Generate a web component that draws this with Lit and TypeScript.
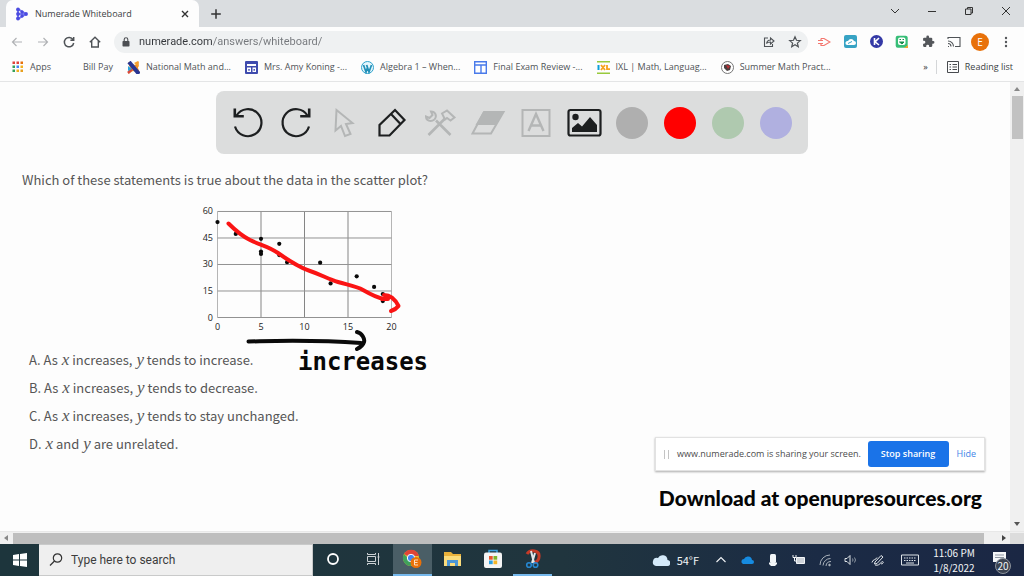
import { LitElement, html, svg, css } from "lit";
import { customElement } from "lit/decorators.js";

const base = css`
  :host, * { box-sizing: border-box; }
  button, input { font: inherit; color: inherit; border: 0; padding: 0; margin: 0; background: none; outline: 0; }
  button { display: flex; align-items: center; justify-content: center; }
  a { color: inherit; text-decoration: none; }
  svg { display: block; flex: none; }
`;

const line = (d: string, w = 1.2, size = 14) => html`<svg width=${size} height=${size} viewBox="0 0 14 14" fill="none" stroke="currentColor" stroke-width=${w}><path d=${d} /></svg>`;

@customElement("browser-chrome")
export class BrowserChrome extends LitElement {
  static styles = [base, css`
    :host { display: block; font: 9px/14px "Open Sans", sans-serif; color: #4f5357; background: #fdfdfd; border-bottom: 1px solid #e4e5e6; }
    .strip { display: flex; height: 27px; background: #dadde0; padding-left: 6px; }
    .tab { display: flex; align-items: center; gap: 7px; width: 193px; padding: 0 8px 0 10px; background: #fdfdfd; border-radius: 7px 7px 0 0; color: #3c3f43; }
    .name { flex: 1; text-align: left; }
    .close { width: 12px; height: 14px; color: #333; }
    .plus { width: 34px; color: #333; }
    .win { display: flex; margin-left: auto; height: 22px; color: #333; }
    .win button { width: 37px; }
    .bar { display: flex; align-items: center; height: 29px; padding: 0 5px 0 4px; }
    .icon { width: 26px; height: 24px; flex: none; }
    .dim { color: #b0b2b5; }
    .pill { display: flex; align-items: center; flex: 1; height: 22px; margin: 0 3px 0 6px; padding: 0 0 0 8px; border-radius: 11px; background: #eff1f2; }
    .url { flex: 1; min-width: 0; margin-left: 9px; font: 11px/14px Roboto, sans-serif; background: linear-gradient(90deg, #33363a 73px, #74777b 73px); background-clip: text; -webkit-background-clip: text; -webkit-text-fill-color: transparent; }
    .marks { display: flex; align-items: center; height: 25px; padding: 0 11px 3px 12px; gap: 14px; }
    .mark { display: flex; align-items: center; gap: 6px; white-space: nowrap; }
    .plain { margin: 0 0 0 18px; }
    .more { margin-left: auto; color: #333; }
    .list { padding-left: 10px; margin-left: -6px; border-left: 1px solid #d4d6d8; color: #3c3f43; }
    .avatar { width: 18px; height: 18px; border-radius: 9px; background: #e8710a; color: #fff; text-align: center; font-size: 10px; line-height: 18px; }
  `];

  render() {
    const marks = [
      ["National Math and...", svg`<path d="M1 1 8 4 12 0 11 7 13 12 6 10 1 13 3 7Z" fill="#f0932b"/><path d="M2 1 12 13" stroke="#283593" stroke-width="4"/><path d="M1 12 5 8" stroke="#d94a3d" stroke-width="2.500"/><path d="m7 2 4-2 1 6Z" fill="#f6a12d"/><path d="M1 5 5 8 1 10Z" fill="#29a3dc"/>`],
      ["Mrs. Amy Koning -...", svg`<rect width="13" height="13" rx="1" fill="#3f4bae"/><path d="M2 3h9v2H2ZM2 6.500h4V11H2ZM7.500 6.500H11V11H7.500Z" fill="#fff"/><path d="M3.300 8h1.400v1.700H3.300ZM8.500 8h1.400v1.700H8.500Z" fill="#3f4bae"/>`],
      ["Algebra 1 – When...", svg`<circle cx="6.500" cy="6.500" r="6" fill="#e6f6fc" stroke="#2ea2cc"/><path d="m2.500 4 2.500 7 1.500-4.500L8 11l2.500-7M5.500 4l1 2.500" fill="none" stroke="#2290b8" stroke-width="1.700"/>`],
      ["Final Exam Review -...", svg`<path d="M.7.7h11.600v11.600H.7ZM.7 4h11.600M7 4v8" fill="#fff" stroke="#4a7bea" stroke-width="1.400"/>`],
      ["IXL | Math, Languag...", svg`<path d="M0 .8h13M0 12.200h13" stroke="#98c93c" stroke-width="1.500"/><path d="M1.500 4v5" stroke="#0aa0d8" stroke-width="2"/><path d="m4 4 4 5m0-5L4 9m6-5v4.200h3" fill="none" stroke="#f7a21b" stroke-width="1.800"/>`],
      ["Summer Math Pract...", svg`<circle cx="6.500" cy="6.500" r="6" fill="#fff" stroke="#777"/><path d="m3 4 4-1 3 2-1 4-3 1-3-3Z" fill="#4b4040"/><path d="m5 4 4 1-2 3Z" fill="#c22f35"/>`],
    ] as const;
    return html`
      <div class="strip">
        <div class="tab">
          <svg width="12" height="14" viewBox="0 0 12 14"><path d="M2 2v10M2 2l8 5-8 5M2 7h8" stroke="#7b7cf0" stroke-width="2" fill="none"/><g fill="#4b4be0"><circle cx="2" cy="2.500" r="1.900"/><circle cx="2" cy="7" r="1.900"/><circle cx="2" cy="11.500" r="1.900"/><circle cx="6" cy="5" r="1.700"/><circle cx="6" cy="9" r="1.700"/><circle cx="10" cy="7" r="1.900"/></g></svg>
          <span class="name">Numerade Whiteboard</span>
          <button class="close" aria-label="Close tab">${line("M4 4l6 6M10 4l-6 6", 1.4)}</button>
        </div>
        <button class="plus" aria-label="New tab">${line("M7 2.200v9.600M2.200 7h9.600", 1.5)}</button>
        <div class="win">
          <button aria-label="Search tabs">${line("M3 5l4 4 4-4", 1)}</button>
          <button aria-label="Minimize">${line("M3 7.500h8", 1)}</button>
          <button aria-label="Restore">${line("M3.500 5h5.500v5.500H3.500ZM5.500 5V3.500h5v5.500H9", 1)}</button>
          <button aria-label="Close">${line("M3 3l8 8M11 3l-8 8", 1)}</button>
        </div>
      </div>
      <div class="bar">
        <button class="icon dim" aria-label="Back">${line("M12 7H2.500M6.500 3l-4 4 4 4")}</button>
        <button class="icon dim" aria-label="Forward">${line("M2 7h9.500M7.500 3l4 4-4 4")}</button>
        <button class="icon" aria-label="Reload">${line("M11 4.500A4.700 4.700 0 1 0 11.700 8M11.700 2v3.300H8.400", 1.5)}</button>
        <button class="icon" aria-label="Home">${line("M1.800 7.300 7 2.300l5.200 5M3.700 6v6h6.600V6", 1.4)}</button>
        <div class="pill">
          <svg width="8" height="10" viewBox="0 0 8 10"><rect x=".5" y="4" width="7" height="5.500" rx=".7" fill="#4c4f53"/><path d="M2.200 4V2.600a1.800 1.800 0 0 1 3.600 0V4" fill="none" stroke="#4c4f53" stroke-width="1.100"/></svg>
          <input class="url" aria-label="Address" value="numerade.com/answers/whiteboard/" />
          <button class="icon" aria-label="Share">${line("M6 3H2.500v8.500h8V9M4.500 8.500C5 6 6.500 5 8.500 5V3L12 6 8.500 9V7C7 7 5.500 7.300 4.500 8.500Z", 1.1)}</button>
          <button class="icon" aria-label="Bookmark">${line("M7 1.800l1.500 3.500 3.800.3-2.900 2.500.9 3.700L7 9.800l-3.300 2 .9-3.700-2.900-2.500 3.800-.3Z", 1.2)}</button>
        </div>
        <button class="icon" aria-label="Screencastify"><svg width="14" height="12" viewBox="-2 0 14 12" fill="none" stroke="#f4766e" stroke-width="1.200"><path d="M2 2.500h3l6 3.500-6 3.500H2V8M-1 4.500h5M-1 7.500h5M2 2.500V4"/></svg></button>
        <button class="icon" aria-label="Cloud extension"><svg width="13" height="13"><rect width="13" height="13" rx="2" fill="#37a3c4"/><path d="M3 10h7a2 2 0 0 0 0-4 3.300 3.300 0 0 0-6 0 2 2 0 0 0-1 4Z" fill="#fff"/><path d="M4 8.500 8 6.500" stroke="#37a3c4"/></svg></button>
        <button class="icon" aria-label="Kami"><svg width="13" height="13"><circle cx="6.500" cy="6.500" r="6.500" fill="#3439a6"/><path d="M4.500 3v7M9 3 5 6.800 9 10" fill="none" stroke="#fff" stroke-width="1.600"/></svg></button>
        <button class="icon" aria-label="Bitmoji"><svg width="14" height="14"><rect x=".7" y=".7" width="12" height="12" rx="2" fill="#37be77"/><rect x="3" y="2.500" width="7.500" height="7.500" rx="2" fill="#fff"/><path d="M4.500 4.500h1.500M7.500 4.500h1.500M4.500 7h4.500l-2 2Z" stroke="#168c4b" fill="#168c4b"/><path d="m9 13 4-3v3Z" fill="#f3a42d"/></svg></button>
        <button class="icon" aria-label="Extensions"><svg width="13" height="13" viewBox="0 0 24 24" fill="#54575b"><path d="M20.500 11H19V7a2 2 0 0 0-2-2h-4V3.500a2.500 2.500 0 0 0-5 0V5H4a2 2 0 0 0-2 2v3.800h1.500a2.700 2.700 0 0 1 0 5.400H2V20c0 1.100.9 2 2 2h3.800v-1.500a2.700 2.700 0 0 1 5.400 0V22H17a2 2 0 0 0 2-2v-4h1.500a2.500 2.500 0 0 0 0-5Z"/></svg></button>
        <button class="icon" aria-label="Cast">${line("M1 4V2.500h12v9H8M1 11.500h1M1 8.500a3 3 0 0 1 3 3M1 6a5.500 5.500 0 0 1 5.500 5.500", 1.1)}</button>
        <button class="icon" aria-label="Profile"><span class="avatar">E</span></button>
        <button class="icon" aria-label="Menu"><svg width="4" height="12" fill="#54575b"><circle cx="2" cy="2" r="1.200"/><circle cx="2" cy="6" r="1.200"/><circle cx="2" cy="10" r="1.200"/></svg></button>
      </div>
      <nav class="marks">
        <a class="mark" href="#"><svg width="12" height="12">${["#e0433a", "#e0433a", "#e8710a", "#34a05a", "#4285f4", "#f2b01e", "#34a05a", "#f2b01e", "#e8a01e"].map((c, i) => svg`<rect x=${(i % 3) * 4 + 0.5} y=${Math.floor(i / 3) * 4 + 0.5} width="2.500" height="2.500" fill=${c}/>`)}</svg>Apps</a>
        <a class="mark plain" href="#">Bill Pay</a>
        ${marks.map(([t, g]) => html`<a class="mark" href="#"><svg width="13" height="13">${g}</svg>${t}</a>`)}
        <button class="more" aria-label="More bookmarks">»</button>
        <button class="mark list"><svg width="12" height="12" fill="none" stroke="#484b4f"><path d="M.5.5h11v11H.5ZM2.500 3.500H4M5.500 3.500h4.500M2.500 6H4M5.500 6h4.500M2.500 8.500H4M5.500 8.500h4.500"/></svg>Reading list</button>
      </nav>`;
  }
}

@customElement("tool-palette")
export class ToolPalette extends LitElement {
  static styles = [base, css`
    :host { display: flex; padding: 8px; border-radius: 8px; background: #dcdddd; color: #1d1f20; }
    button { width: 48px; height: 47px; }
    .off { color: #b4b6b6; }
  `];

  tool(name: string, g: unknown, off = false) {
    return html`<button class=${off ? "off" : ""} aria-label=${name}><svg width="36" height="32" viewBox="0 0 36 32" fill="none" stroke="currentColor" stroke-width="2.200">${g}</svg></button>`;
  }

  render() {
    return html`
      ${this.tool("Undo", svg`<path d="M5 19.500A13.500 13.500 0 1 0 6.500 8.500"/><path d="M4.800 1.500v7.700h9" stroke-width="2.600"/>`)}
      ${this.tool("Redo", svg`<path d="M31 19.500A13.500 13.500 0 1 1 29.500 8.500"/><path d="M31.200 1.500v7.700h-9" stroke-width="2.600"/>`)}
      ${this.tool("Select", svg`<path d="m10.500 3 16 13-6.500 1 4.500 10-5.500 2-4-10-5.500 4.500Z" stroke-width="2"/>`, true)}
      ${this.tool("Pen", svg`<path d="M5.500 28.500V18L21 3l9.500 10L15.500 28.500ZM17 7l9.500 10"/>`)}
      ${this.tool("Tools", svg`<path d="m6.500 28 17-17M28.500 28 14 13.500" stroke-width="2.600"/><path d="M12.500 12.500c3-4 .5-8-3.500-8l1.500 3.500-3 3-3.500-1.500c0 4 4.500 6 8.500 3M20 6.500l5-3 7.500 7-4 3-3.500-2.500-2 1.500Z" stroke-width="2"/>`, true)}
      ${this.tool("Eraser", svg`<path d="M14 5h19.500L21 26.500H2.500Z" stroke-width="2"/><path d="M13 5h20l-7 13H5.500Z" fill="currentColor" stroke="none"/>`, true)}
      ${this.tool("Text", svg`<path d="M4.500 3h27v26h-27Z" stroke-width="2"/><path d="m10.500 24 7.500-17 7.500 17M13 18.500h10" stroke-width="2.400"/>`, true)}
      ${this.tool("Image", svg`<rect x="2.500" y="3" width="32" height="25.500" rx="2"/><circle cx="9.500" cy="10" r="3.200" fill="currentColor" stroke="none"/><path d="M6 25v-4l6-5 4 3.500L24 10l7 8v7Z" fill="currentColor" stroke="none"/>`)}
      <button aria-label="Gray"><svg width="32" height="32"><circle cx="16" cy="16" r="16" fill="#afafaf"/></svg></button>
      <button aria-label="Red"><svg width="32" height="32"><circle cx="16" cy="16" r="16" fill="#ff0000"/></svg></button>
      <button aria-label="Green"><svg width="32" height="32"><circle cx="16" cy="16" r="16" fill="#afc9af"/></svg></button>
      <button aria-label="Purple"><svg width="32" height="32"><circle cx="16" cy="16" r="16" fill="#b0b0e0"/></svg></button>`;
  }
}

@customElement("scatter-plot")
export class ScatterPlot extends LitElement {
  static styles = [base, css`
    :host { display: block; position: relative; font: 9px "Open Sans", sans-serif; }
    .ink { position: absolute; top: 0; left: 0; pointer-events: none; }
    .word { position: absolute; top: 147px; left: 108px; font: bold 24px/30px "DejaVu Sans Mono", monospace; color: #080808; }
    .tick { fill: #222; }
  `];

  points = [[0, 54], [2.1, 47.3], [5, 44.5], [5, 37.3], [5, 36], [7.1, 41.7], [7.1, 35.3], [8, 31.3], [11.8, 31], [13, 19.3], [16, 23.3], [18, 17.3], [19, 13.3], [19, 9.3]];

  render() {
    const px = (v: number) => 27.5 + v * 8.7;
    const py = (v: number) => 117.5 - v * 1.767;
    return html`
      <svg width="250" height="146" role="img" aria-label="Scatter plot">
        ${[0, 5, 10, 15, 20].map((v) => svg`<path d="M${px(v)} 11.500V117.500" stroke=${v === 0 || v === 20 ? "#b5b5b5" : "#858585"}/><text class="tick" x=${px(v)} y="130" text-anchor="middle">${v}</text>`)}
        ${[0, 15, 30, 45, 60].map((v) => svg`<path d="M27.500 ${py(v)}H201.500" stroke="#929292"/><text class="tick" x="23" y=${py(v) + 3} text-anchor="end">${v}</text>`)}
        ${this.points.map(([x, y]) => svg`<circle cx=${px(x)} cy=${py(y)} r="2.100" fill="#0a0a0a"/>`)}
      </svg>
      <svg class="ink" width="250" height="180" fill="none" stroke-linecap="round" stroke-linejoin="round">
        <path d="M38.500 23.500C44 29 50 35 60 40S78 46 88 53s20 14 32 18 18 8 28 11 18 4 25 8 14 8 21 9" stroke="#fa1414" stroke-width="4"/>
        <path d="M194 95C201 95 205 99 208.500 106 207 108 204 110 201 111M192 99h6" stroke="#fa1414" stroke-width="4"/>
        <path d="M58.500 141.500C85 141 120 139.500 171 143M167 132c5 1 8 7 7 10s-3 5-7 7" stroke="#0a0a0a" stroke-width="4"/>
      </svg>
      <span class="word">increases</span>`;
  }
}

@customElement("task-bar")
export class TaskBar extends LitElement {
  static styles = [base, css`
    :host { display: flex; height: 32px; background: linear-gradient(90deg, #1d353c, #20353e 55%, #1b2b45 80%, #1b2744); color: #f2f5f7; font: 11px/14px "Noto Sans CJK SC", sans-serif; }
    button { flex: none; }
    .start { width: 39px; }
    .find { display: flex; align-items: center; gap: 8px; width: 274px; padding: 0 10px; background: #efefef; color: #333; border: 1px solid #c9caca; border-left: 0; }
    .query { flex: 1; min-width: 0; font: 12px/16px Roboto, sans-serif; }
    .query::placeholder { color: #3d3d3d; opacity: 1; }
    .apps { display: flex; justify-content: space-between; width: 239px; }
    .app { width: 39px; border-bottom: 2px solid transparent; }
    .on { background: #4a5e66; }
    .open { border-bottom-color: #76b9ed; }
    .tray { display: flex; align-items: center; margin-left: auto; }
    .weather { gap: 7px; margin-right: 9px; }
    .item { width: 26px; height: 30px; }
    .mid { width: 28px; }
    .wide { width: 36px; }
    .clock { flex-direction: column; width: 52px; font-size: 10px; line-height: 15px; }
    .note { position: relative; width: 44px; height: 30px; }
    .count { position: absolute; right: 13px; bottom: 1px; width: 16px; height: 16px; border-radius: 8px; background: #3a4250; border: 1px solid #8c939c; font-size: 10px; line-height: 13px; text-align: center; }
  `];

  render() {
    return html`
      <button class="start" aria-label="Start"><svg width="14" height="14" fill="#fff"><path d="M0 2 6 1v5.500H0ZM7 1l7-1v6.500H7ZM0 7.500h6V13l-6-1ZM7 7.500h7V14l-7-1Z"/></svg></button>
      <label class="find"><svg width="14" height="14" fill="none" stroke="#333" stroke-width="1.200"><circle cx="8.500" cy="5" r="4.200"/><path d="M5.500 8 1 12.500"/></svg><input class="query" aria-label="Search" placeholder="Type here to search" /></label>
      <div class="apps">
        <button class="app" aria-label="Cortana"><svg width="14" height="14"><circle cx="7" cy="7" r="5" fill="none" stroke="#fff" stroke-width="1.800"/></svg></button>
        <button class="app" aria-label="Task view"><svg width="14" height="14" fill="none" stroke="#ccd2d5"><path d="M1.500 4.500h8v5h-8ZM1.500 1v1.500h8V1M1.500 13v-1.500h8V13M12.500 1v12M11.500 5h2"/></svg></button>
        <button class="app on open" aria-label="Chrome"><svg width="22" height="22"><circle cx="9" cy="10" r="8" fill="#f3c32b"/><path d="M9 10 2 6a8 8 0 0 1 14-.2L17 8H9Z" fill="#df4437"/><path d="M2 6a8 8 0 0 0 7 12l2-5-4-2Z" fill="#3fa15b"/><circle cx="9" cy="10" r="3.700" fill="#4285f4" stroke="#fff"/><circle cx="14" cy="14.500" r="5.500" fill="#e8710a"/><path d="M16 12h-3.500v5H16M12.500 14.500h3" fill="none" stroke="#fde0c0"/></svg></button>
        <button class="app" aria-label="File Explorer"><svg width="18" height="16"><path d="M0 1h7l2 2h8v12H0Z" fill="#e9b13b"/><path d="M0 5h17v10H0Z" fill="#fbdc7c"/><path d="M3 9h11v6h-3v-3H6v3H3Z" fill="#4c96d6"/></svg></button>
        <button class="app" aria-label="Microsoft Store"><svg width="20" height="20"><path d="M6 4V1.500h8V4" fill="none" stroke="#3ba1dc" stroke-width="1.500"/><rect x="1" y="3.500" width="18" height="15.500" rx="2" fill="#f4f4f4"/><path d="M6 7h3.700v3.700H6Z" fill="#e8542b"/><path d="M10.500 7h3.700v3.700h-3.700Z" fill="#7eb62a"/><path d="M6 11.500h3.700v3.700H6Z" fill="#2b9fe0"/><path d="M10.500 11.500h3.700v3.700h-3.700Z" fill="#f5b526"/></svg></button>
        <button class="app open" aria-label="Snip"><svg width="20" height="20" fill="none"><path d="M4 5C7 0 17 1 16 8c0 4-3 5-5 6" stroke="#c53a27" stroke-width="3"/><path d="M8 2 11 14M12 4 9 14" stroke="#e2e7ea" stroke-width="2"/><circle cx="6" cy="16" r="2.300" stroke="#2687d0" stroke-width="1.600"/><circle cx="12.500" cy="16" r="2.300" stroke="#2687d0" stroke-width="1.600"/></svg></button>
      </div>
      <div class="tray">
        <button class="weather"><svg width="18" height="14"><path d="M4 13h11a3 3 0 0 0 .5-6A5 5 0 0 0 6 5a4 4 0 0 0-2 8Z" fill="#d4eafa"/></svg>54°F</button>
        <button class="item" aria-label="Hidden icons">${line("M2.500 9 7 4.500 11.500 9", 1.1)}</button>
        <button class="item" aria-label="OneDrive"><svg width="14" height="10"><path d="M3 9h9a2 2 0 0 0 0-4 4.200 4.200 0 0 0-8-1 2.600 2.600 0 0 0-1 5Z" fill="#168be0"/></svg></button>
        <button class="item" aria-label="Microphone"><svg width="10" height="14" fill="#f2f5f7"><rect x="2" y="1" width="6" height="9" rx="1.500"/><path d="M1 9.500h8v1.500l-2 2H3l-2-2Z"/></svg></button>
        <button class="item" aria-label="Battery"><svg width="14" height="12" fill="none" stroke="#f2f5f7"><path d="M4.500 3.500h8v6h-8Z" fill="#cdd2d8"/><path d="M1 1v2.500h3V1M2.500 3.500V7h2"/></svg></button>
        <button class="item" aria-label="Network"><svg width="13" height="13" fill="none" stroke="#a9b1ba"><path d="M1 11A10 10 0 0 1 11 1M4 11.500a7.500 7.500 0 0 1 7.500-7M7 12a5 5 0 0 1 5-4.500"/><circle cx="10.500" cy="11" r=".8" fill="#fff"/></svg></button>
        <button class="item" aria-label="Volume"><svg width="14" height="12" fill="none" stroke="#dfe4e8"><path d="M1 4.500h2l3-3v9l-3-3H1Z"/><path d="M8.500 4.500q1 1.500 0 3M10.500 3.500q2 2.500 0 5" stroke="#8e98a3"/></svg></button>
        <button class="item mid" aria-label="Pen"><svg width="14" height="14" fill="none" stroke="#e2e6ea"><path d="m4 9 6-6.500 2 1.500-6 6.500L3.500 11ZM1 9.500c0-3 5-3 5-5M4 12c3 1 5-1 6-2.500s3-1 2 .5-2 1-2 0"/></svg></button>
        <button class="item wide" aria-label="Keyboard"><svg width="18" height="12" fill="none" stroke="#dfe4e8"><path d="M.5 1h17v10H.5Z"/><path d="M3 4h12M3 6.500h12" stroke-dasharray="1.500 1"/><path d="M5 9h8"/></svg></button>
        <button class="clock"><span>11:06 PM</span><span>1/8/2022</span></button>
        <button class="note" aria-label="Notifications"><svg width="20" height="22"><path d="M1 3h13v10H8l-3 3v-3H1Z" fill="#f4f6f8"/><path d="M3 6h9M3 8.500h9" stroke="#8d95a1"/></svg><span class="count">20</span></button>
      </div>`;
  }
}

@customElement("app-root")
export class AppRoot extends LitElement {
  static styles = [base, css`
    :host { display: flex; flex-direction: column; min-height: 100vh; background: #fdfdfd; font: 13px/28px "Noto Sans CJK SC", sans-serif; color: #565656; }
    .view { display: flex; flex: 1; }
    .board { flex: 1; display: flex; flex-direction: column; padding: 9px 0 0 14px; }
    .tools { align-self: center; }
    .work { flex: 1; display: flex; justify-content: space-between; padding-top: 12px; }
    .question { padding-left: 8px; }
    .ask, .answers { margin: 0; }
    .plot { margin: 6px 0 0 168px; }
    .answers { list-style: none; padding: 0 0 0 7px; }
    .var { margin-left: 1px; font: italic 17px/20px "Liberation Serif", serif; }
    .side { display: flex; flex-direction: column; align-items: flex-end; align-self: flex-end; margin: 0 25px 19px 0; }
    .share { display: flex; align-items: center; width: 330px; height: 34px; padding: 0 8px; background: #fff; border: 1px solid #e2e2e2; box-shadow: 0 1px 2px #aaa; font: 9px/14px "Open Sans", sans-serif; color: #4c4c4c; white-space: nowrap; }
    .grip { width: 5px; height: 9px; border: solid #c4c4c4; border-width: 0 1px; margin-right: 8px; }
    .stop { width: 81px; height: 26px; margin: 0 8px 0 auto; border-radius: 3px; background: #1a73e8; color: #fff; font-weight: 600; }
    .hide { color: #4285e8; }
    .credit { margin: 13px 3px 0 0; font: 900 21px/28px Lato, sans-serif; color: #050505; white-space: nowrap; }
    .vbar { display: flex; flex-direction: column; align-items: center; justify-content: space-between; width: 14px; padding: 5px 0; background: #f0f0f0; }
    .vthumb { width: 11px; height: 43px; background: #c2c2c2; margin: 5px 0 auto; }
    .hbar { display: flex; align-items: center; height: 13px; background: #f0f0f0; padding-left: 4px; border-top: 1px solid #e8e8e8; }
    .hthumb { flex: 1; height: 11px; margin: 0 18px 0 5px; background: #bebebe; }
    .corner { width: 14px; height: 11px; margin-left: 4px; background: #dcdcdc; }
  `];

  render() {
    const x = html`<i class="var">x</i>`;
    const y = html`<i class="var">y</i>`;
    return html`
      <browser-chrome></browser-chrome>
      <div class="view">
        <main class="board">
          <tool-palette class="tools"></tool-palette>
          <div class="work">
            <section class="question">
              <p class="ask">Which of these statements is true about the data in the scatter plot?</p>
              <scatter-plot class="plot"></scatter-plot>
              <ul class="answers">
                <li>A. As ${x} increases, ${y} tends to increase.</li>
                <li>B. As ${x} increases, ${y} tends to decrease.</li>
                <li>C. As ${x} increases, ${y} tends to stay unchanged.</li>
                <li>D. ${x} and ${y} are unrelated.</li>
              </ul>
            </section>
            <aside class="side">
              <div class="share"><span class="grip"></span><span>www.numerade.com is sharing your screen.</span><button class="stop">Stop sharing</button><a class="hide" href="#">Hide</a></div>
              <p class="credit">Download at openupresources.org</p>
            </aside>
          </div>
        </main>
        <div class="vbar">
          <svg width="6" height="4"><path d="m0 4 3-4 3 4Z" fill="#888"/></svg>
          <div class="vthumb"></div>
          <svg width="6" height="4"><path d="m0 0 3 4 3-4Z" fill="#555"/></svg>
        </div>
      </div>
      <div class="hbar">
        <svg width="4" height="6"><path d="M4 0 0 3l4 3Z" fill="#888"/></svg>
        <div class="hthumb"></div>
        <svg width="4" height="6"><path d="m0 0 4 3-4 3Z" fill="#444"/></svg>
        <div class="corner"></div>
      </div>
      <task-bar></task-bar>`;
  }
}
